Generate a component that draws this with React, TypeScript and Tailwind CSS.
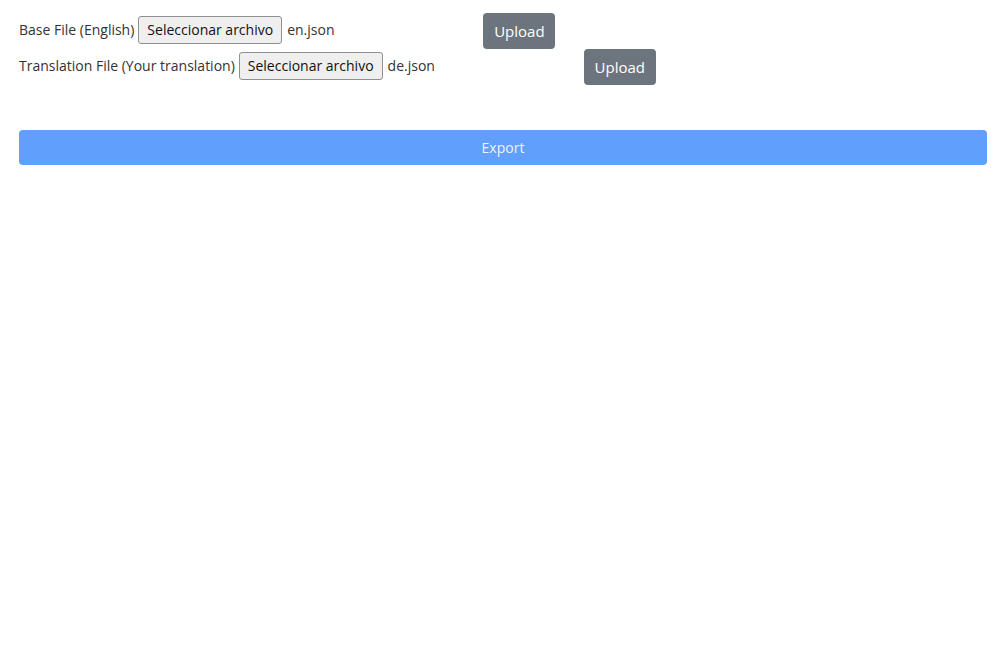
import React from 'react';

interface FileRowProps {
  label: string;
  fileName: string;
}

function FileRow({ label, fileName }: FileRowProps) {
  return (
    <div className="flex h-9 items-center">
      <span className="mb-[3px] mr-[4px]">{label}</span>
      <div className="mb-[3px] flex w-[345px] shrink-0 items-center">
        <span className="flex h-7 items-center rounded-[3px] border border-[#8f8f8f] bg-[#efefef] px-2 text-[#111]">
          Seleccionar archivo
        </span>
        <span className="ml-[5px]">{fileName}</span>
      </div>
      <button className="h-9 w-[72px] rounded-[4px] bg-[#6c757d] text-[15px] text-white">Upload</button>
    </div>
  );
}

export default function App() {
  return (
    <div className="min-h-[652px] bg-white pl-[19px] pr-[13px] pt-[13px] text-[14px] text-[#333] [font-family:'Open_Sans','Noto_Sans',sans-serif]">
      <FileRow label="Base File (English)" fileName="en.json" />
      <FileRow label="Translation File (Your translation)" fileName="de.json" />
      <button className="mt-[45px] h-[35px] w-full rounded-[4px] bg-[#619ffd] text-[14px] text-[#eef4ff]">
        Export
      </button>
    </div>
  );
}
